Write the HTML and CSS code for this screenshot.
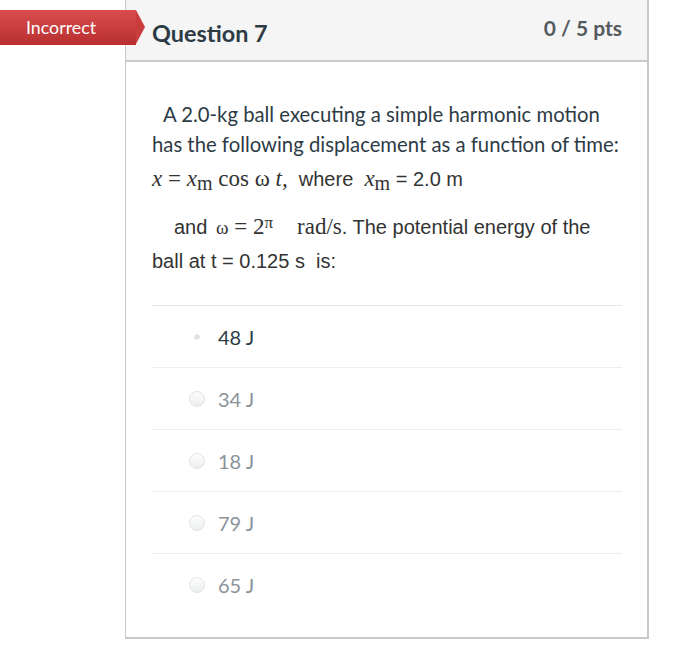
FILE: index.html
```html
<!DOCTYPE html>
<html>
<head>
<meta charset="utf-8">
<link rel="stylesheet" href="styles.css">
</head>
<body>
<div class="page">
  <div class="badge">Incorrect</div>
  <div class="card">
    <div class="header">
      <h2 class="title">Question 7</h2>
      <div class="pts">0 / 5 pts</div>
    </div>
    <div class="content">
      <div class="qtext">
        <p class="lato">A 2.0-kg ball executing a simple harmonic motion has the following displacement as a function of time:</p>
        <p class="eq"><span class="m">x</span><span class="mr"> = </span><span class="m">x</span><span class="sub">m</span><span class="mr"> cos </span><span class="mr">ω</span><span class="m"> t,</span>&nbsp; where&nbsp; <span class="m">x</span><span class="sub">m</span> = 2.0 m</p>
        <p class="arial">and&nbsp;<span class="mr sm">ω</span><span class="mr"> = 2</span><span class="pi">π</span><span class="mr gap">rad/s</span>. The potential energy of the ball at t = 0.125 s&nbsp; is:</p>
      </div>
      <div class="answers">
        <div class="answer selected"><span class="radio dot"></span><span class="label">48 J</span></div>
        <div class="answer"><span class="radio"></span><span class="label">34 J</span></div>
        <div class="answer"><span class="radio"></span><span class="label">18 J</span></div>
        <div class="answer"><span class="radio"></span><span class="label">79 J</span></div>
        <div class="answer"><span class="radio"></span><span class="label">65 J</span></div>
      </div>
    </div>
  </div>
</div>
</body>
</html>
```
FILE: styles.css
```css
html, body {
  margin: 0;
  padding: 0;
  background: #fff;
}
.page {
  position: relative;
  width: 700px;
  height: 663px;
}
.badge {
  position: absolute;
  left: 0;
  top: 10px;
  width: 136px;
  height: 35px;
  background: linear-gradient(#d84c4c, #b92f2f);
  color: #fff;
  font-family: Lato, sans-serif;
  font-size: 17.8px;
  line-height: 35px;
  box-sizing: border-box;
  padding-left: 26px;
  z-index: 2;
}
.badge::after {
  content: "";
  position: absolute;
  right: -9px;
  top: 0;
  border-top: 17.5px solid transparent;
  border-bottom: 17.5px solid transparent;
  border-left: 9px solid #c93d3d;
}
.card {
  margin-left: 125px;
  width: 524px;
  height: 639px;
  box-sizing: border-box;
  border: 1px solid #c5c9cc;
  border-top: none;
  border-bottom-width: 2px;
  border-right-width: 2px;
  display: flex;
  flex-direction: column;
}
.header {
  height: 62px;
  flex: none;
  background: #f5f5f5;
  border-bottom: 2px solid #c7cbce;
  display: flex;
  align-items: center;
  justify-content: space-between;
  padding: 0 25px 0 26px;
  box-sizing: border-box;
}
.title {
  margin: 0;
  font-family: Lato, sans-serif;
  font-weight: 700;
  font-size: 23.4px;
  color: #2d3b45;
  padding-top: 6px;
}
.pts {
  font-family: Lato, sans-serif;
  font-weight: 700;
  font-size: 21px;
  color: #555a5e;
  margin-top: -6px;
}
.content {
  padding: 0 25px 0 26px;
}
.qtext {
  padding-top: 37px;
  height: 206px;
  border-bottom: 1px solid #e6e8ea;
  color: #2d3b45;
}
.qtext p {
  margin: 0;
}
.lato {
  font-family: Lato, sans-serif;
  font-size: 20.3px;
  line-height: 30px;
  text-indent: 11px;
}
.eq {
  font-family: "Liberation Sans", Arial, sans-serif;
  font-size: 20px;
  line-height: 30px;
  margin-top: 5px !important;
  color: #333;
}
.arial {
  font-family: "Liberation Sans", Arial, sans-serif;
  font-size: 20px;
  line-height: 32px;
  margin-top: 17px !important;
  color: #333;
  text-indent: 22px;
}
.m {
  font-family: "Liberation Serif", "Times New Roman", serif;
  font-style: italic;
  font-size: 23px;
}
.mr {
  font-family: "Liberation Serif", "Times New Roman", serif;
  font-size: 23px;
}
.mr.sm {
  font-size: 19px;
  margin-left: 3px;
}
.mr.gap {
  margin-left: 24px;
}
.sub {
  font-family: "Liberation Serif", "Times New Roman", serif;
  font-size: 20px;
  position: relative;
  top: 4px;
}
.pi {
  font-family: "Liberation Serif", "Times New Roman", serif;
  font-size: 17px;
  position: relative;
  top: -6px;
}
.answers {
  display: flex;
  flex-direction: column;
}
.answer {
  height: 61px;
  flex: none;
  border-bottom: 1px solid #eceeef;
  display: flex;
  align-items: center;
  font-family: Lato, sans-serif;
  font-size: 20px;
  color: #8b939a;
}
.answer:last-child {
  border-bottom: none;
}
.answer.selected {
  color: #2d3b45;
}
.radio {
  width: 16px;
  height: 16px;
  border-radius: 50%;
  box-sizing: border-box;
  border: 1px solid #e2e4e6;
  background: linear-gradient(#fdfdfd, #eceeef);
  margin-left: 37px;
  margin-right: 13px;
  flex: none;
}
.radio.dot {
  width: 6px;
  height: 6px;
  margin-left: 42px;
  margin-right: 18px;
  border-color: #e8e8e8;
  background: #dfe1e3;
}
```
